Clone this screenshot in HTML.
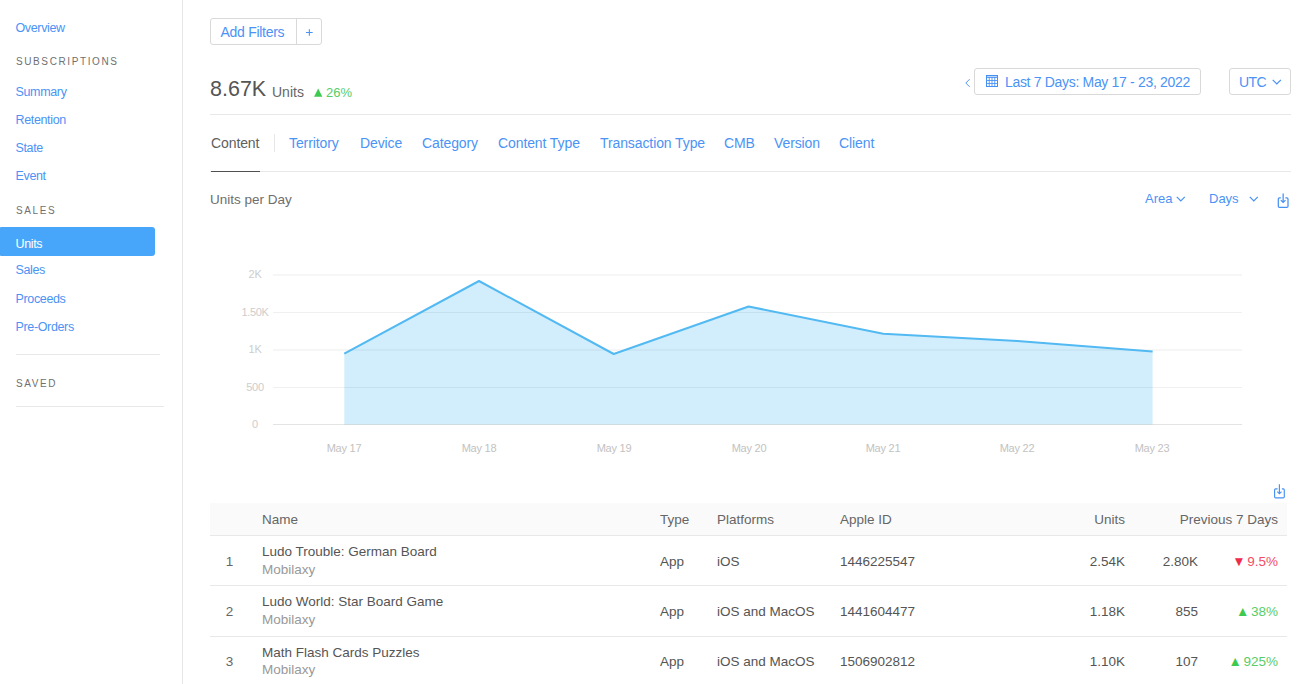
<!DOCTYPE html>
<html><head><meta charset="utf-8">
<style>
*{margin:0;padding:0;box-sizing:border-box}
html,body{width:1303px;height:684px;overflow:hidden;background:#fff}
body{font-family:"Liberation Sans",sans-serif;color:#333;position:relative}
.a{position:absolute;white-space:nowrap;line-height:1}
.lk{color:#4b93f5}
.side{position:absolute;left:0;top:0;width:183px;height:684px;border-right:1px solid #e6e6e6}
.si{font-size:12.5px;letter-spacing:-0.35px}
.sh{font-size:10px;letter-spacing:1.6px;color:#707070}
.hr{position:absolute;height:1px;background:#e8e8e8}
.tab{font-size:14px;letter-spacing:-0.1px}
.grid{position:absolute;left:273px;width:969px;height:1px;background:#f0f0f0}
.yl{font-size:11px;color:#cdcdcd;width:40px;text-align:center;letter-spacing:-0.3px}
.xl{font-size:11px;color:#c2c2c2;width:60px;text-align:center;letter-spacing:-0.25px}
.th{font-size:13.5px;color:#666}
.td{font-size:13.5px;color:#555}
.sub{font-size:13.5px;color:#999}
.r{text-align:right}
.g{color:#58cd69}
.red{color:#f24d66}
</style></head><body>
<div class="side"></div>
<div class="a lk si" style="left:15.5px;top:22px">Overview</div>
<div class="a sh" style="left:16px;top:57px">SUBSCRIPTIONS</div>
<div class="a lk si" style="left:15.5px;top:86px">Summary</div>
<div class="a lk si" style="left:15.5px;top:114px">Retention</div>
<div class="a lk si" style="left:15.5px;top:142px">State</div>
<div class="a lk si" style="left:15.5px;top:170px">Event</div>
<div class="a sh" style="left:16px;top:206px">SALES</div>
<div style="position:absolute;left:0;top:227px;width:155px;height:29px;background:#48a6fa;border-radius:1px 3px 3px 1px"></div>
<div class="a si" style="left:15.5px;top:237.5px;color:#fff">Units</div>
<div class="a lk si" style="left:15.5px;top:264px">Sales</div>
<div class="a lk si" style="left:15.5px;top:293px">Proceeds</div>
<div class="a lk si" style="left:15.5px;top:321px">Pre-Orders</div>
<div class="hr" style="left:16px;top:354px;width:144px"></div>
<div class="a sh" style="left:16px;top:379px">SAVED</div>
<div class="hr" style="left:16px;top:406px;width:148px"></div>

<!-- filters -->
<div style="position:absolute;left:210px;top:18px;width:112px;height:27px;border:1px solid #d9d9d9;border-radius:3px"></div>
<div style="position:absolute;left:296px;top:19px;width:1px;height:25px;background:#d9d9d9"></div>
<div class="a lk" style="left:220.5px;top:24.5px;font-size:14px;letter-spacing:-0.28px">Add Filters</div>
<svg style="position:absolute;left:305px;top:28px" width="9" height="9" viewBox="0 0 9 9"><path d="M1 4.5H7.7M4.35 1.2V7.8" stroke="#4b93f5" stroke-width="1.1"/></svg>

<div class="a" style="left:210px;top:79px;font-size:21.5px;color:#555">8.67K</div>
<div class="a" style="left:272px;top:85px;font-size:14px;color:#666">Units</div>
<svg style="position:absolute;left:314px;top:88px" width="9" height="9" viewBox="0 0 9 9"><path d="M4.2 0.6L8.3 8.8H0.1Z" fill="#3ec94f"/></svg><div class="a g" style="left:326px;top:86px;font-size:13px">26%</div>

<svg style="position:absolute;left:964px;top:78px" width="7" height="10" viewBox="0 0 7 10"><path d="M5.6 1.2L1.8 5L5.6 8.8" fill="none" stroke="#4690f4" stroke-width="0.95"/></svg>
<div style="position:absolute;left:974px;top:68px;width:227px;height:27px;border:1px solid #d9d9d9;border-radius:3px"></div>
<svg style="position:absolute;left:986px;top:75px" width="12" height="12" viewBox="0 0 12 12"><rect x="0.5" y="0.5" width="11" height="11" fill="none" stroke="#4690f4"/><rect x="1" y="1" width="10" height="1" fill="#4690f4" opacity="0.35"/><path d="M0 2.5H12M0 5.5H12M0 8.5H12M3.25 2V12M6 2V12M8.75 2V12" stroke="#4690f4" stroke-width="0.85"/></svg>
<div class="a lk" style="left:1005px;top:75px;font-size:14px;letter-spacing:-0.32px">Last 7 Days: May 17 - 23, 2022</div>
<div style="position:absolute;left:1229px;top:68px;width:62px;height:27px;border:1px solid #d9d9d9;border-radius:3px"></div>
<div class="a lk" style="left:1239px;top:75px;font-size:14px;letter-spacing:-0.6px">UTC</div>
<svg style="position:absolute;left:1272px;top:79.4px" width="10" height="6" viewBox="0 0 10 6"><path d="M0.7 0.8L4.8 4.9L8.9 0.8" fill="none" stroke="#4690f4" stroke-width="1.2"/></svg>

<div class="hr" style="left:210px;top:114px;width:1081px"></div>

<!-- tabs -->
<div class="a tab" style="left:211px;top:136px;color:#606060">Content</div>
<div style="position:absolute;left:274px;top:134px;width:1px;height:18px;background:#e6e6e6"></div>
<div class="a tab lk" style="left:289px;top:136px">Territory</div>
<div class="a tab lk" style="left:360px;top:136px">Device</div>
<div class="a tab lk" style="left:422px;top:136px">Category</div>
<div class="a tab lk" style="left:498px;top:136px">Content Type</div>
<div class="a tab lk" style="left:600px;top:136px">Transaction Type</div>
<div class="a tab lk" style="left:724px;top:136px">CMB</div>
<div class="a tab lk" style="left:774px;top:136px">Version</div>
<div class="a tab lk" style="left:839px;top:136px">Client</div>
<div class="hr" style="left:210px;top:171px;width:1081px"></div>
<div style="position:absolute;left:211px;top:171px;width:49px;height:1px;background:#505050"></div>

<div class="a" style="left:210px;top:193px;font-size:13.5px;color:#6e6e6e">Units per Day</div>
<div class="a lk" style="left:1145px;top:192px;font-size:13px">Area</div>
<svg style="position:absolute;left:1176px;top:195.6px" width="10" height="6" viewBox="0 0 10 6"><path d="M0.8 0.8L4.8 4.8L8.8 0.8" fill="none" stroke="#4690f4" stroke-width="1.2"/></svg>
<div class="a lk" style="left:1209px;top:192px;font-size:13px">Days</div>
<svg style="position:absolute;left:1249px;top:195.6px" width="10" height="6" viewBox="0 0 10 6"><path d="M0.8 0.8L4.8 4.8L8.8 0.8" fill="none" stroke="#4690f4" stroke-width="1.2"/></svg>
<svg style="position:absolute;left:1272px;top:188px" width="24" height="24" viewBox="0 0 24 24"><path d="M8.8 9.9H7.5Q6.3 9.9 6.3 11.1V18.2Q6.3 19.4 7.5 19.4H14.8Q16 19.4 16 18.2V11.1Q16 9.9 14.8 9.9H13.4" fill="none" stroke="#4690f4" stroke-width="1.25"/><path d="M11.15 5.4V14.3M8.8 12.1L11.15 14.4L13.5 12.1" fill="none" stroke="#4690f4" stroke-width="1.25"/></svg>

<!-- chart -->
<div class="a yl" style="left:235px;top:269px">2K</div>
<div class="a yl" style="left:235px;top:307px">1.50K</div>
<div class="a yl" style="left:235px;top:344px">1K</div>
<div class="a yl" style="left:235px;top:382px">500</div>
<div class="a yl" style="left:235px;top:419px">0</div>
<svg style="position:absolute;left:0;top:0" width="1303" height="684">
<polygon points="344.3,353.6 479,281 613.7,354 748.6,306.5 883.2,333.8 1017.4,341 1152.6,351.5 1152.6,424.5 344.3,424.5" fill="#d2eefc"/>
<g stroke-width="1">
<line x1="273" y1="275" x2="1242" y2="275" stroke="rgba(0,0,0,0.07)"/>
<line x1="273" y1="312.5" x2="1242" y2="312.5" stroke="rgba(0,0,0,0.06)"/>
<line x1="273" y1="350" x2="1242" y2="350" stroke="rgba(0,0,0,0.07)"/>
<line x1="273" y1="387.5" x2="1242" y2="387.5" stroke="rgba(0,0,0,0.06)"/>
<line x1="273" y1="424.5" x2="1242" y2="424.5" stroke="rgba(0,0,0,0.11)"/>
</g>
<polyline points="344.3,353.6 479,281 613.7,354 748.6,306.5 883.2,333.8 1017.4,341 1152.6,351.5" fill="none" stroke="#52b9f2" stroke-width="2" stroke-linejoin="round"/>
</svg>
<div class="a xl" style="left:314px;top:443px">May 17</div>
<div class="a xl" style="left:449px;top:443px">May 18</div>
<div class="a xl" style="left:584px;top:443px">May 19</div>
<div class="a xl" style="left:719px;top:443px">May 20</div>
<div class="a xl" style="left:853px;top:443px">May 21</div>
<div class="a xl" style="left:987px;top:443px">May 22</div>
<div class="a xl" style="left:1122px;top:443px">May 23</div>

<!-- table -->
<svg style="position:absolute;left:1268px;top:480px" width="24" height="24" viewBox="0 0 24 24"><path d="M9.6 8.9H7.7Q6.6 8.9 6.6 10V16.8Q6.6 17.9 7.7 17.9H15.2Q16.3 17.9 16.3 16.8V10Q16.3 8.9 15.2 8.9H13.9" fill="none" stroke="#4690f4" stroke-width="1.15"/><path d="M11.4 4.3V13.9M9.3 11.7L11.4 13.8L13.5 11.7" fill="none" stroke="#4690f4" stroke-width="1.15"/></svg>
<div style="position:absolute;left:210px;top:503px;width:1077px;height:32px;background:#fafafa"></div>
<div class="hr" style="left:210px;top:535px;width:1077px"></div>
<div class="hr" style="left:210px;top:585px;width:1077px"></div>
<div class="hr" style="left:210px;top:636px;width:1077px"></div>
<div class="a th" style="left:262px;top:513px">Name</div>
<div class="a th" style="left:660px;top:513px">Type</div>
<div class="a th" style="left:717px;top:513px">Platforms</div>
<div class="a th" style="left:840px;top:513px">Apple ID</div>
<div class="a th r" style="left:1025px;width:100px;top:513px">Units</div>
<div class="a th r" style="left:1128px;width:150px;top:513px">Previous 7 Days</div>

<div class="a td" style="left:221.5px;width:16px;text-align:center;top:555px;color:#666">1</div>
<div class="a td" style="left:262px;top:545px">Ludo Trouble: German Board</div>
<div class="a sub" style="left:262px;top:563px">Mobilaxy</div>
<div class="a td" style="left:660px;top:555px">App</div>
<div class="a td" style="left:717px;top:555px">iOS</div>
<div class="a td" style="left:840px;top:555px">1446225547</div>
<div class="a td r" style="left:1025px;width:100px;top:555px">2.54K</div>
<div class="a td r" style="left:1098px;width:100px;top:555px">2.80K</div>
<div class="a td r red" style="left:1178px;width:100px;top:555px"><span style="color:#ef2b4b">&#9660;</span><span style="margin-left:1.5px">9.5%</span></div>

<div class="a td" style="left:221.5px;width:16px;text-align:center;top:605px;color:#666">2</div>
<div class="a td" style="left:262px;top:595px">Ludo World: Star Board Game</div>
<div class="a sub" style="left:262px;top:613px">Mobilaxy</div>
<div class="a td" style="left:660px;top:605px">App</div>
<div class="a td" style="left:717px;top:605px">iOS and MacOS</div>
<div class="a td" style="left:840px;top:605px">1441604477</div>
<div class="a td r" style="left:1025px;width:100px;top:605px">1.18K</div>
<div class="a td r" style="left:1098px;width:100px;top:605px">855</div>
<div class="a td r g" style="left:1178px;width:100px;top:605px"><span style="color:#3ec94f">&#9650;</span><span style="margin-left:1.5px">38%</span></div>

<div class="a td" style="left:221.5px;width:16px;text-align:center;top:655px;color:#666">3</div>
<div class="a td" style="left:262px;top:646px">Math Flash Cards Puzzles</div>
<div class="a sub" style="left:262px;top:663px">Mobilaxy</div>
<div class="a td" style="left:660px;top:655px">App</div>
<div class="a td" style="left:717px;top:655px">iOS and MacOS</div>
<div class="a td" style="left:840px;top:655px">1506902812</div>
<div class="a td r" style="left:1025px;width:100px;top:655px">1.10K</div>
<div class="a td r" style="left:1098px;width:100px;top:655px">107</div>
<div class="a td r g" style="left:1178px;width:100px;top:655px"><span style="color:#3ec94f">&#9650;</span><span style="margin-left:1.5px">925%</span></div>
</body></html>
